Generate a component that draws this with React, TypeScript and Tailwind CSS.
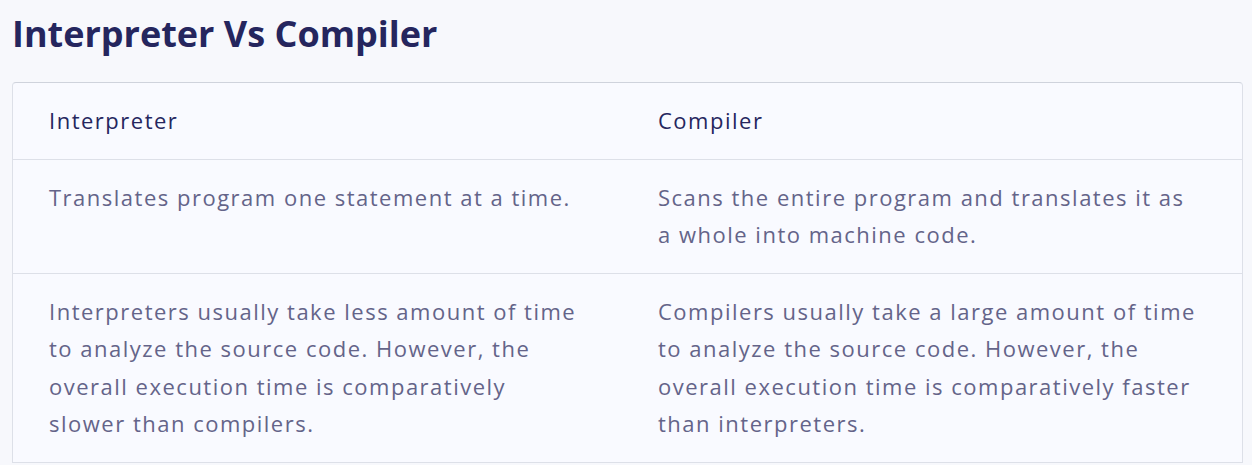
const rows: [string, string][] = [
  [
    "Translates program one statement at a time.",
    "Scans the entire program and translates it as a whole into machine code.",
  ],
  [
    "Interpreters usually take less amount of time to analyze the source code. However, the overall execution time is comparatively slower than compilers.",
    "Compilers usually take a large amount of time to analyze the source code. However, the overall execution time is comparatively faster than interpreters.",
  ],
];

export default function App() {
  return (
    <div className="h-[465px] w-[1252px] overflow-hidden bg-[#f7f8fc] font-['Open_Sans',sans-serif]">
      <h1 className="pl-3 pt-[12px] text-[36px] font-bold leading-[44px] text-[#25265e]">
        Interpreter Vs Compiler
      </h1>
      <div className="mx-3 mt-[26px] w-[1231px] rounded-t border border-[#dde0e8] border-t-[#cfd3dc] bg-[#f9faff]">
        <div className="grid grid-cols-[609px_1fr] border-b border-[#dde0e8] text-[22px] leading-[37.5px] tracking-[1.5px] text-[#25265e]">
          <div className="py-[19px] pl-9 pr-6">Interpreter</div>
          <div className="py-[19px] pl-9 pr-6">Compiler</div>
        </div>
        {rows.map(([a, b], i) => (
          <div
            key={i}
            className="grid grid-cols-[609px_1fr] border-b border-[#dde0e8] text-[22px] leading-[37.5px] tracking-[1.5px] text-[#646489] last:border-b-0"
          >
            <div className="py-[19px] pl-9 pr-9">{a}</div>
            <div className="py-[19px] pl-9 pr-[42px]">{b}</div>
          </div>
        ))}
      </div>
    </div>
  );
}
